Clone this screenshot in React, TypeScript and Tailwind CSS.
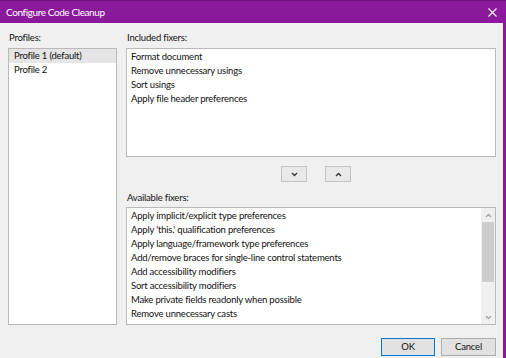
import React from "react";

const included = [
  "Format document",
  "Remove unnecessary usings",
  "Sort usings",
  "Apply file header preferences",
];

const available = [
  "Apply implicit/explicit type preferences",
  "Apply 'this.' qualification preferences",
  "Apply language/framework type preferences",
  "Add/remove braces for single-line control statements",
  "Add accessibility modifiers",
  "Sort accessibility modifiers",
  "Make private fields readonly when possible",
  "Remove unnecessary casts",
];

function Chevron({ up = false, className = "" }: { up?: boolean; className?: string }) {
  return (
    <svg width="7" height="5" viewBox="0 0 7 5" className={className}>
      <path
        d={up ? "M1 4 L3.5 1.5 L6 4" : "M1 1 L3.5 3.5 L6 1"}
        fill="none"
        stroke="currentColor"
        strokeWidth="1.3"
      />
    </svg>
  );
}

export default function App() {
  return (
    <div
      className="w-[506px] h-[358px] overflow-hidden flex flex-col bg-[#f0f0f0] text-[9.5px] tracking-[-0.2px] text-[#111]"
      style={{ fontFamily: 'Lato, "Noto Sans", sans-serif' }}
    >
      {/* Title bar */}
      <div className="h-[23px] shrink-0 flex items-center justify-between bg-[#8a1a9b] border-t border-[#6c1379] pl-[6px] pr-[9px] text-white text-[10px] tracking-[-0.4px]">
        <span>Configure Code Cleanup</span>
        <svg width="9" height="9" viewBox="0 0 9 9">
          <path d="M0.5 0.5 L8.5 8.5 M8.5 0.5 L0.5 8.5" stroke="#fff" strokeWidth="1.1" />
        </svg>
      </div>

      <div className="flex-1 flex border-r-[3px] border-[#8a1a9b]">
        <div className="flex-1 flex flex-col pt-[8px]">
          <div className="flex">
            {/* Profiles */}
            <div className="ml-[8px] w-[109px] flex flex-col">
              <div className="h-[14px] leading-[14px] pl-[1px]">Profiles:</div>
              <div className="mt-[3px] h-[277px] bg-white border border-[#b9b9b9] p-0">
                <div className="h-[14px] leading-[14px] pl-[5px] bg-[#e5e5e5]">Profile 1 (default)</div>
                <div className="h-[14px] leading-[14px] pl-[5px]">Profile 2</div>
              </div>
            </div>

            {/* Fixers */}
            <div className="ml-[9px] w-[370px] flex flex-col">
              <div className="h-[14px] leading-[14px] pl-[1px]">Included fixers:</div>
              <div className="mt-[3px] h-[109px] bg-white border border-[#b9b9b9] pt-[1px]">
                {included.map((t) => (
                  <div key={t} className="h-[14px] leading-[14px] pl-[4px]">
                    {t}
                  </div>
                ))}
              </div>

              <div className="mt-[9px] flex justify-center gap-[18px] pl-[10px]">
                <button className="w-[26px] h-[16px] flex items-center justify-center bg-[#e9e9e9] border border-[#c4c4c4] text-[#333]">
                  <Chevron />
                </button>
                <button className="w-[26px] h-[16px] flex items-center justify-center bg-[#e9e9e9] border border-[#c4c4c4] text-[#333]">
                  <Chevron up />
                </button>
              </div>

              <div className="mt-[9px] h-[14px] leading-[14px] pl-[1px]">Available fixers:</div>
              <div className="mt-[2px] h-[118px] bg-white border border-[#b9b9b9] flex">
                <div className="flex-1 pt-[1px]">
                  {available.map((t) => (
                    <div key={t} className="h-[14px] leading-[14px] pl-[4px] whitespace-nowrap">
                      {t}
                    </div>
                  ))}
                </div>
                <div className="w-[14px] bg-[#f0f0f0] flex flex-col items-center text-[#a3a3a3]">
                  <div className="h-[14px] flex items-center justify-center">
                    <Chevron up />
                  </div>
                  <div className="w-[12px] h-[60px] bg-[#cdcdcd]" />
                  <div className="flex-1" />
                  <div className="h-[14px] flex items-center justify-center">
                    <Chevron />
                  </div>
                </div>
              </div>
            </div>
          </div>

          {/* Dialog buttons */}
          <div className="mt-[13px] flex justify-end gap-[6px] pr-[7px]">
            <button className="w-[54px] h-[18px] bg-[#e1e1e1] border border-[#0078d7] leading-none">
              OK
            </button>
            <button className="w-[55px] h-[18px] bg-[#e1e1e1] border border-[#adadad] leading-none">
              Cancel
            </button>
          </div>
        </div>
      </div>
    </div>
  );
}
